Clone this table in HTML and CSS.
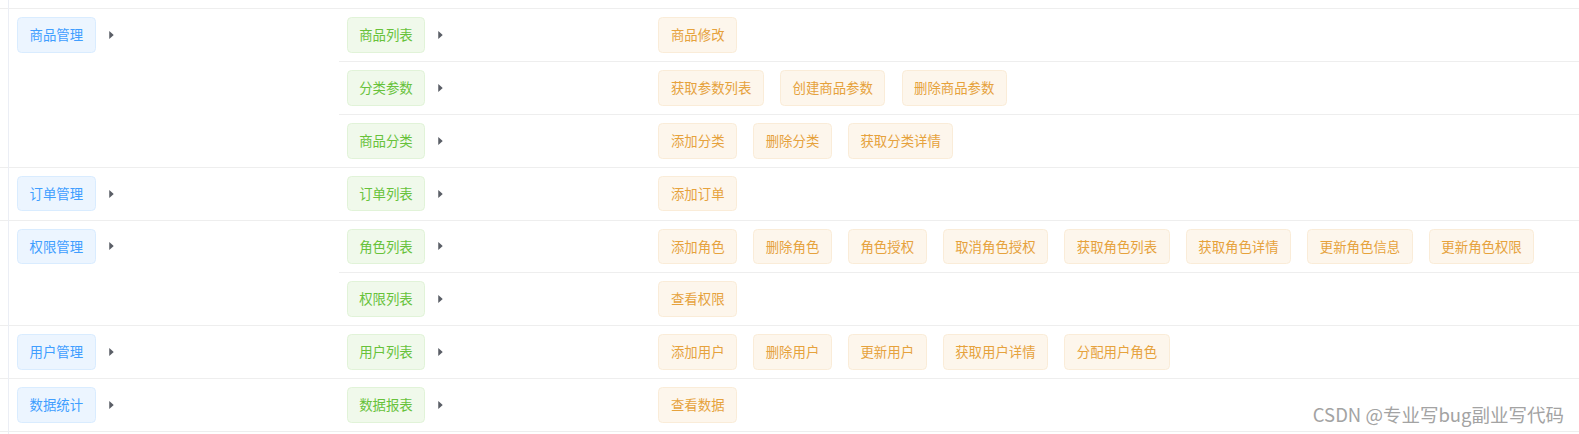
FILE: index.html
```html
<!DOCTYPE html>
<html lang="zh-CN">
<head>
<meta charset="utf-8">
<title>权限展开</title>
<link rel="stylesheet" href="styles.css">
</head>
<body>
<div class="expand">
  <div class="lv1 first">
    <div class="col1"><span class="tag blue">商品管理</span><svg class="caret" viewBox="0 0 5 9"><path d="M0 0L5 4.5L0 9Z"/></svg></div>
    <div class="rest">
      <div class="lv2">
        <div class="col2"><span class="tag green">商品列表</span><svg class="caret" viewBox="0 0 5 9"><path d="M0 0L5 4.5L0 9Z"/></svg></div>
        <div class="col3"><span class="tag orange">商品修改</span></div>
      </div>
      <div class="lv2">
        <div class="col2"><span class="tag green">分类参数</span><svg class="caret" viewBox="0 0 5 9"><path d="M0 0L5 4.5L0 9Z"/></svg></div>
        <div class="col3"><span class="tag orange">获取参数列表</span><span class="tag orange">创建商品参数</span><span class="tag orange">删除商品参数</span></div>
      </div>
      <div class="lv2">
        <div class="col2"><span class="tag green">商品分类</span><svg class="caret" viewBox="0 0 5 9"><path d="M0 0L5 4.5L0 9Z"/></svg></div>
        <div class="col3"><span class="tag orange">添加分类</span><span class="tag orange">删除分类</span><span class="tag orange">获取分类详情</span></div>
      </div>
    </div>
  </div>
  <div class="lv1">
    <div class="col1"><span class="tag blue">订单管理</span><svg class="caret" viewBox="0 0 5 9"><path d="M0 0L5 4.5L0 9Z"/></svg></div>
    <div class="rest">
      <div class="lv2">
        <div class="col2"><span class="tag green">订单列表</span><svg class="caret" viewBox="0 0 5 9"><path d="M0 0L5 4.5L0 9Z"/></svg></div>
        <div class="col3"><span class="tag orange">添加订单</span></div>
      </div>
    </div>
  </div>
  <div class="lv1">
    <div class="col1"><span class="tag blue">权限管理</span><svg class="caret" viewBox="0 0 5 9"><path d="M0 0L5 4.5L0 9Z"/></svg></div>
    <div class="rest">
      <div class="lv2">
        <div class="col2"><span class="tag green">角色列表</span><svg class="caret" viewBox="0 0 5 9"><path d="M0 0L5 4.5L0 9Z"/></svg></div>
        <div class="col3"><span class="tag orange">添加角色</span><span class="tag orange">删除角色</span><span class="tag orange">角色授权</span><span class="tag orange">取消角色授权</span><span class="tag orange">获取角色列表</span><span class="tag orange">获取角色详情</span><span class="tag orange">更新角色信息</span><span class="tag orange">更新角色权限</span></div>
      </div>
      <div class="lv2">
        <div class="col2"><span class="tag green">权限列表</span><svg class="caret" viewBox="0 0 5 9"><path d="M0 0L5 4.5L0 9Z"/></svg></div>
        <div class="col3"><span class="tag orange">查看权限</span></div>
      </div>
    </div>
  </div>
  <div class="lv1">
    <div class="col1"><span class="tag blue">用户管理</span><svg class="caret" viewBox="0 0 5 9"><path d="M0 0L5 4.5L0 9Z"/></svg></div>
    <div class="rest">
      <div class="lv2">
        <div class="col2"><span class="tag green">用户列表</span><svg class="caret" viewBox="0 0 5 9"><path d="M0 0L5 4.5L0 9Z"/></svg></div>
        <div class="col3"><span class="tag orange">添加用户</span><span class="tag orange">删除用户</span><span class="tag orange">更新用户</span><span class="tag orange">获取用户详情</span><span class="tag orange">分配用户角色</span></div>
      </div>
    </div>
  </div>
  <div class="lv1">
    <div class="col1"><span class="tag blue">数据统计</span><svg class="caret" viewBox="0 0 5 9"><path d="M0 0L5 4.5L0 9Z"/></svg></div>
    <div class="rest">
      <div class="lv2">
        <div class="col2"><span class="tag green">数据报表</span><svg class="caret" viewBox="0 0 5 9"><path d="M0 0L5 4.5L0 9Z"/></svg></div>
        <div class="col3"><span class="tag orange">查看数据</span></div>
      </div>
    </div>
  </div>
  <div class="watermark">CSDN @专业写bug副业写代码</div>
</div>
</body>
</html>
```

FILE: styles.css
```css
html, body {
  margin: 0;
  padding: 0;
  background: #fff;
  overflow: hidden;
}
body {
  font-family: "Noto Sans CJK SC", "Noto Sans", sans-serif;
  width: 1579px;
  height: 434px;
}
.expand {
  position: relative;
  padding-top: 8px;
  height: 426px;
}
.expand::before {
  content: "";
  position: absolute;
  left: 8px;
  top: 0;
  bottom: 0;
  width: 1px;
  background: #ebeef5;
}
.lv1 {
  display: flex;
  align-items: flex-start;
  border-bottom: 1px solid #eee;
  padding-left: 9px;
}
.lv1.first {
  border-top: 1px solid #eee;
}
.col1 {
  flex: none;
  width: 329.6px;
  display: flex;
  align-items: center;
}
.rest {
  flex: 1;
  min-width: 0;
}
.lv2 {
  display: flex;
  align-items: center;
}
.lv2 + .lv2 {
  border-top: 1px solid #eee;
}
.col2 {
  flex: none;
  width: 311.8px;
  display: flex;
  align-items: center;
}
.col3 {
  flex: 1;
  display: flex;
  flex-wrap: wrap;
}
.tag {
  box-sizing: border-box;
  display: inline-block;
  height: 35.7px;
  line-height: 33.7px;
  padding: 0 11.5px;
  margin: 8.1px;
  font-size: 13.4px;
  border: 1px solid;
  border-radius: 4.5px;
  white-space: nowrap;
}
.blue {
  background: #ecf5ff;
  border-color: #d9ecff;
  color: #409eff;
}
.green {
  background: #f0f9eb;
  border-color: #e1f3d8;
  color: #67c23a;
}
.orange {
  background: #fdf6ec;
  border-color: #faecd8;
  color: #e6a23c;
}
.caret {
  width: 5px;
  height: 8px;
  margin-left: 5px;
  fill: #5a5e66;
}
.watermark {
  position: absolute;
  right: 15px;
  top: 401px;
  font-size: 18.5px;
  line-height: 26px;
  color: #a3a3a3;
  text-shadow: 0 0 1px #fff, 0 0 1px #fff;
  white-space: nowrap;
}
```
